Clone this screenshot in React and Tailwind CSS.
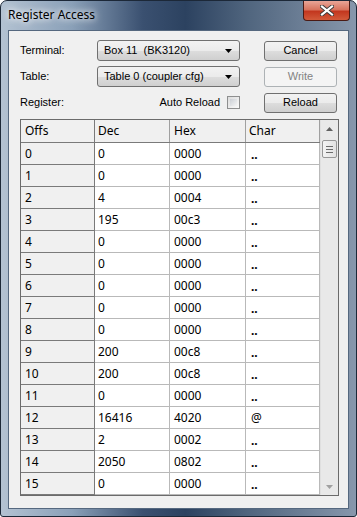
import React from "react";

const rows = [
  [0, 0, "0000", ".."],
  [1, 0, "0000", ".."],
  [2, 4, "0004", ".."],
  [3, 195, "00c3", ".."],
  [4, 0, "0000", ".."],
  [5, 0, "0000", ".."],
  [6, 0, "0000", ".."],
  [7, 0, "0000", ".."],
  [8, 0, "0000", ".."],
  [9, 200, "00c8", ".."],
  [10, 200, "00c8", ".."],
  [11, 0, "0000", ".."],
  [12, 16416, "4020", "@"],
  [13, 2, "0002", ".."],
  [14, 2050, "0802", ".."],
  [15, 0, "0000", ".."],
];

function Combo({ text }) {
  return (
    <div className="w-[143px] h-[21px] flex items-center justify-between pl-[6px] pr-[7px] rounded-[3px] border border-[#707070] bg-[linear-gradient(#f2f2f2,#ebebeb_50%,#dddddd_51%,#cfcfcf)]">
      <span className="whitespace-pre">{text}</span>
      <svg width="7" height="4" viewBox="0 0 7 4">
        <path d="M0 0h7L3.5 4z" fill="#000" />
      </svg>
    </div>
  );
}

function Button({ label, disabled }) {
  return (
    <div
      className={
        disabled
          ? "w-[73px] h-[20px] flex items-center justify-center rounded-[3px] border border-[#adb2b5] bg-[#f4f4f4] text-[#838383]"
          : "w-[73px] h-[20px] flex items-center justify-center rounded-[3px] border border-[#707070] bg-[linear-gradient(#f2f2f2,#ebebeb_50%,#dddddd_51%,#cfcfcf)]"
      }
    >
      {label}
    </div>
  );
}

function Scrollbar() {
  return (
    <div className="w-[18px] flex flex-col bg-[#e9e9e9] border-l border-[#e0e0e0]">
      <div className="h-[17px] flex items-center justify-center">
        <svg width="7" height="4" viewBox="0 0 7 4">
          <path d="M0 4h7L3.5 0z" fill="#606060" />
        </svg>
      </div>
      <div className="mx-[1px] mt-[3px] h-[18px] rounded-[2px] border border-[#979797] bg-[linear-gradient(90deg,#f3f3f3,#e2e2e2)] flex flex-col items-center justify-center gap-[2px]">
        <div className="w-[7px] h-[1px] bg-[#6c6c6c]" />
        <div className="w-[7px] h-[1px] bg-[#6c6c6c]" />
        <div className="w-[7px] h-[1px] bg-[#6c6c6c]" />
      </div>
      <div className="flex-1" />
      <div className="h-[17px] flex items-center justify-center">
        <svg width="7" height="4" viewBox="0 0 7 4">
          <path d="M0 0h7L3.5 4z" fill="#a0a0a0" />
        </svg>
      </div>
    </div>
  );
}

export default function App() {
  return (
    <div className="w-[357px] h-[517px] relative flex flex-col rounded-t-[7px] rounded-b-[3px] border border-[#1c2838] bg-[linear-gradient(90deg,#b3c2d2_0%,#8aa0b8_20%,#3a5070_40%,#2c4260_52%,#51667f_70%,#8797ac_100%)]">
      {/* title bar */}
      <div className="h-[29px] flex items-center pl-[7px] pb-[1px]">
        <span className="text-[12px] text-black font-['Noto_Sans',sans-serif] [text-shadow:0_0_6px_#fff,0_0_10px_#fff]">
          Register Access
        </span>
      </div>
      <div className="absolute top-0 right-[6px] w-[47px] h-[20px] rounded-b-[4px] border border-t-0 border-[#4a1a14] bg-[linear-gradient(#e9a597,#d8745f_45%,#c3371f_55%,#d25a3a)] flex items-center justify-center">
        <svg width="14" height="11" viewBox="0 0 14 11">
          <path d="M2 1.5l10 8M12 1.5l-10 8" stroke="#3a3a3a" strokeWidth="4" strokeLinecap="square" />
          <path d="M2 1.5l10 8M12 1.5l-10 8" stroke="#fff" strokeWidth="2.2" strokeLinecap="square" />
        </svg>
      </div>

      {/* client area */}
      <div className="mx-[7px] mb-[7px] flex-1 border border-[#55687f] bg-[#f0f0f0] flex flex-col pl-[11px] pt-[9px] text-[11px] text-black font-['Liberation_Sans',sans-serif]">
        <div className="flex flex-col gap-[5px]">
          <div className="h-[21px] flex items-center">
            <span className="w-[77px]">Terminal:</span>
            <Combo text="Box 11  (BK3120)" />
            <div className="ml-[24px]">
              <Button label="Cancel" />
            </div>
          </div>
          <div className="h-[21px] flex items-center">
            <span className="w-[77px]">Table:</span>
            <Combo text="Table 0 (coupler cfg)" />
            <div className="ml-[24px]">
              <Button label="Write" disabled />
            </div>
          </div>
          <div className="h-[21px] flex items-center">
            <span className="w-[77px]">Register:</span>
            <div className="w-[143px] flex items-center justify-end gap-[7px]">
              <span>Auto Reload</span>
              <div className="w-[13px] h-[13px] border border-[#8e8f8f] bg-[linear-gradient(135deg,#dcdcdc,#fafafa)] p-[2px]">
                <div className="w-full h-full bg-[linear-gradient(135deg,#cbcfd5,#f4f4f4)]" />
              </div>
            </div>
            <div className="ml-[24px]">
              <Button label="Reload" />
            </div>
          </div>
        </div>

        {/* register table */}
        <div className="mt-[6px] w-[319px] h-[377px] border border-[#6b6b6b] flex bg-white text-[12px] font-['Noto_Sans',sans-serif]">
          <div className="w-[299px] flex flex-col overflow-hidden">
            <div className="h-[23px] flex shrink-0 bg-[#f0f0f0] border-b border-[#7a7a7a]">
              <div className="w-[74px] pl-[4px] flex items-center border-r border-[#7a7a7a]">Offs</div>
              <div className="w-[75px] pl-[3px] flex items-center border-r border-[#a0a0a0]">Dec</div>
              <div className="w-[76px] pl-[4px] flex items-center border-r border-[#a0a0a0]">Hex</div>
              <div className="w-[74px] pl-[3px] flex items-center border-r border-[#a0a0a0]">Char</div>
            </div>
            {rows.map((r) => (
              <div key={r[0]} className="h-[22px] flex shrink-0">
                <div className="w-[74px] pl-[4px] flex items-center bg-[#f0f0f0] border-r border-b border-[#7a7a7a]">{r[0]}</div>
                <div className="w-[75px] pl-[3px] flex items-center border-r border-b border-[#b9b9b9]">{r[1]}</div>
                <div className="w-[76px] pl-[4px] flex items-center border-r border-b border-[#b9b9b9]">{r[2]}</div>
                <div className="w-[74px] pl-[5px] flex items-center border-r border-b border-[#b9b9b9]">
                  {r[3] === "@" ? <span>@</span> : <span className="text-[12px] font-bold pt-[2px]">..</span>}
                </div>
              </div>
            ))}
          </div>
          <Scrollbar />
        </div>
      </div>
    </div>
  );
}
